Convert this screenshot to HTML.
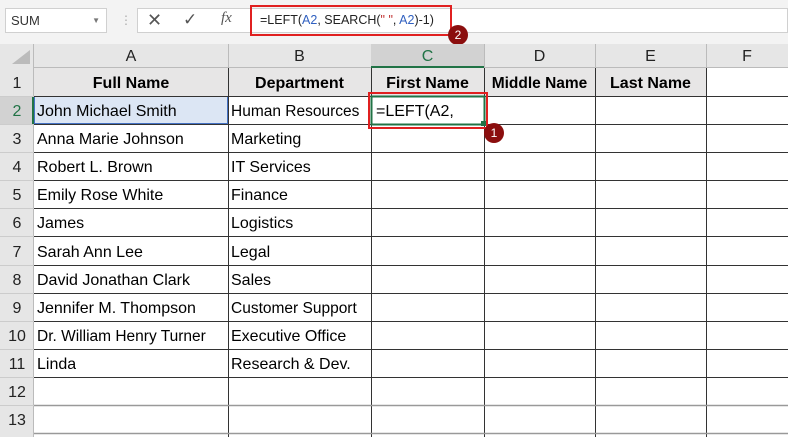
<!DOCTYPE html>
<html><head><meta charset="utf-8"><style>
*{margin:0;padding:0;box-sizing:border-box}
body{width:788px;height:437px;overflow:hidden;background:#fff;font-family:"Liberation Sans",sans-serif;position:relative}
.a{position:absolute}
.c{position:absolute;font-size:16px;color:#000;white-space:nowrap;line-height:31px;overflow:hidden}
.h{position:absolute;font-size:16px;color:#222;text-align:center;line-height:26px}
.r{position:absolute;left:0;width:34px;text-align:center;font-size:16px;color:#222;line-height:31px}
.badge{position:absolute;width:20px;height:20px;border-radius:50%;background:#8b0e0e;color:#fff;font-size:12px;text-align:center;line-height:20px}
</style></head><body>
<div class="a" style="left:0;top:0;width:788px;height:44px;background:#f3f3f3"></div>
<div class="a" style="left:5px;top:8px;width:102px;height:25px;background:#fff;border:1px solid #d0d0d0;font-size:13px;line-height:23px;padding-left:5px;color:#333">SUM<span style="position:absolute;right:6px;font-size:8px;color:#777">▼</span></div>
<div class="a" style="left:120px;top:13px;color:#aaa;font-size:12px">⋮</div>
<div class="a" style="left:137px;top:8px;width:651px;height:25px;background:#fff;border:1px solid #d0d0d0"></div>
<div class="a" style="left:147px;top:10px;font-size:18px;color:#555">✕</div>
<div class="a" style="left:183px;top:10px;font-size:17px;color:#555">✓</div>
<div class="a" style="left:221px;top:10px;font-size:15px;color:#555;font-style:italic;font-family:'Liberation Serif',serif">fx</div>
<div class="a" style="left:250px;top:5px;width:202px;height:31px;border:2px solid #e02020"></div>
<div class="a" style="left:260px;top:13px;font-size:12.5px;color:#222">=LEFT(<span style="color:#3060c0">A2</span>, SEARCH(<span style="color:#c03030">" "</span>, <span style="color:#3060c0">A2</span>)-1)</div>
<div class="badge" style="left:448px;top:25px">2</div>

<div class="a" style="left:0;top:44px;width:788px;height:24px;background:#e6e6e6;border-bottom:1px solid #bbb"></div>
<div class="a" style="left:0;top:44px;width:34px;height:393px;background:#e6e6e6;border-right:1px solid #bbb"></div>
<div class="a" style="left:12px;top:50px;width:0;height:0;border-left:18px solid transparent;border-bottom:14px solid #bbb"></div>
<div class="a" style="left:371px;top:44px;width:113px;height:24px;background:#d2d2d2;border-bottom:2px solid #217346"></div>
<div class="a" style="left:0;top:96px;width:34px;height:28px;background:#d2d2d2;border-right:2px solid #217346"></div>
<div class="h" style="left:34px;top:44px;width:194px">A</div>
<div class="h" style="left:228px;top:44px;width:143px">B</div>
<div class="h" style="left:371px;top:44px;width:113px;color:#217346">C</div>
<div class="h" style="left:484px;top:44px;width:111px">D</div>
<div class="h" style="left:595px;top:44px;width:111px">E</div>
<div class="h" style="left:706px;top:44px;width:82px">F</div>
<div class="a" style="left:228px;top:44px;width:1px;height:24px;background:#bbb"></div>
<div class="a" style="left:484px;top:44px;width:1px;height:24px;background:#bbb"></div>
<div class="a" style="left:595px;top:44px;width:1px;height:24px;background:#bbb"></div>
<div class="a" style="left:706px;top:44px;width:1px;height:24px;background:#bbb"></div>

<div class="a" style="left:34px;top:68px;width:672px;height:28px;background:#e7e6e6"></div>
<div class="a" style="left:34px;top:96px;width:194px;height:28px;background:#dce6f4;border:1px solid #4472c4"></div>

<svg class="a" style="left:0;top:0" width="788" height="437">
<g stroke="#333" stroke-width="1">
<line x1="34" y1="96.5" x2="788" y2="96.5"/>
<line x1="34" y1="124.5" x2="788" y2="124.5"/>
<line x1="34" y1="152.5" x2="788" y2="152.5"/>
<line x1="34" y1="180.5" x2="788" y2="180.5"/>
<line x1="34" y1="208.5" x2="788" y2="208.5"/>
<line x1="34" y1="236.5" x2="788" y2="236.5"/>
<line x1="34" y1="265.5" x2="788" y2="265.5"/>
<line x1="34" y1="293.5" x2="788" y2="293.5"/>
<line x1="34" y1="321.5" x2="788" y2="321.5"/>
<line x1="34" y1="349.5" x2="788" y2="349.5"/>
<line x1="34" y1="377.5" x2="788" y2="377.5"/>
<line x1="228.5" y1="68" x2="228.5" y2="437"/>
<line x1="371.5" y1="68" x2="371.5" y2="437"/>
<line x1="484.5" y1="68" x2="484.5" y2="437"/>
<line x1="595.5" y1="68" x2="595.5" y2="437"/>
<line x1="706.5" y1="68" x2="706.5" y2="437"/>
</g>
<g stroke="#999" stroke-width="1.5">
<line x1="34" y1="405.5" x2="788" y2="405.5"/>
<line x1="34" y1="433.5" x2="788" y2="433.5"/>
</g>
<g stroke="#ccc" stroke-width="1">
<line x1="0" y1="96.5" x2="34" y2="96.5"/><line x1="0" y1="124.5" x2="34" y2="124.5"/><line x1="0" y1="152.5" x2="34" y2="152.5"/><line x1="0" y1="180.5" x2="34" y2="180.5"/><line x1="0" y1="208.5" x2="34" y2="208.5"/><line x1="0" y1="236.5" x2="34" y2="236.5"/><line x1="0" y1="265.5" x2="34" y2="265.5"/><line x1="0" y1="293.5" x2="34" y2="293.5"/><line x1="0" y1="321.5" x2="34" y2="321.5"/><line x1="0" y1="349.5" x2="34" y2="349.5"/><line x1="0" y1="377.5" x2="34" y2="377.5"/><line x1="0" y1="405.5" x2="34" y2="405.5"/>
</g>
<rect x="371.5" y="96.5" width="113" height="28" fill="#fff" stroke="#217346" stroke-width="2"/>
<rect x="481" y="121" width="5" height="5" fill="#217346"/>
<rect x="369" y="93" width="118" height="35" fill="none" stroke="#e02020" stroke-width="2"/>
</svg>
<div class="badge" style="left:484px;top:123px">1</div>

<div class="r" style="top:68px">1</div>
<div class="r" style="top:96px;color:#217346">2</div>
<div class="r" style="top:124px">3</div>
<div class="r" style="top:152px">4</div>
<div class="r" style="top:180px">5</div>
<div class="r" style="top:208px">6</div>
<div class="r" style="top:237px">7</div>
<div class="r" style="top:265px">8</div>
<div class="r" style="top:293px">9</div>
<div class="r" style="top:321px">10</div>
<div class="r" style="top:349px">11</div>
<div class="r" style="top:377px">12</div>
<div class="r" style="top:405px">13</div>

<div class="c" style="left:34px;top:68px;width:194px;text-align:center;font-weight:bold">Full Name</div>
<div class="c" style="left:228px;top:68px;width:143px;text-align:center;font-weight:bold">Department</div>
<div class="c" style="left:371px;top:68px;width:113px;text-align:center;font-weight:bold">First Name</div>
<div class="c" style="left:484px;top:68px;width:111px;text-align:center;font-weight:bold;font-size:15.5px">Middle Name</div>
<div class="c" style="left:595px;top:68px;width:111px;text-align:center;font-weight:bold">Last Name</div>

<div class="c" style="left:37px;top:96px">John Michael Smith</div>
<div class="c" style="left:37px;top:124px">Anna Marie Johnson</div>
<div class="c" style="left:37px;top:152px">Robert L. Brown</div>
<div class="c" style="left:37px;top:180px">Emily Rose White</div>
<div class="c" style="left:37px;top:208px">James</div>
<div class="c" style="left:37px;top:237px">Sarah Ann Lee</div>
<div class="c" style="left:37px;top:265px">David Jonathan Clark</div>
<div class="c" style="left:37px;top:293px">Jennifer M. Thompson</div>
<div class="c" style="left:37px;top:321px;font-size:15.5px">Dr. William Henry Turner</div>
<div class="c" style="left:37px;top:349px">Linda</div>

<div class="c" style="left:231px;top:96px;width:140px;font-size:15.5px">Human Resources</div>
<div class="c" style="left:231px;top:124px">Marketing</div>
<div class="c" style="left:231px;top:152px">IT Services</div>
<div class="c" style="left:231px;top:180px">Finance</div>
<div class="c" style="left:231px;top:208px">Logistics</div>
<div class="c" style="left:231px;top:237px">Legal</div>
<div class="c" style="left:231px;top:265px">Sales</div>
<div class="c" style="left:231px;top:293px;width:140px;font-size:15.5px">Customer Support</div>
<div class="c" style="left:231px;top:321px">Executive Office</div>
<div class="c" style="left:231px;top:349px">Research &amp; Dev.</div>

<div class="c" style="left:376px;top:96px">=LEFT(A2,</div>
</body></html>
